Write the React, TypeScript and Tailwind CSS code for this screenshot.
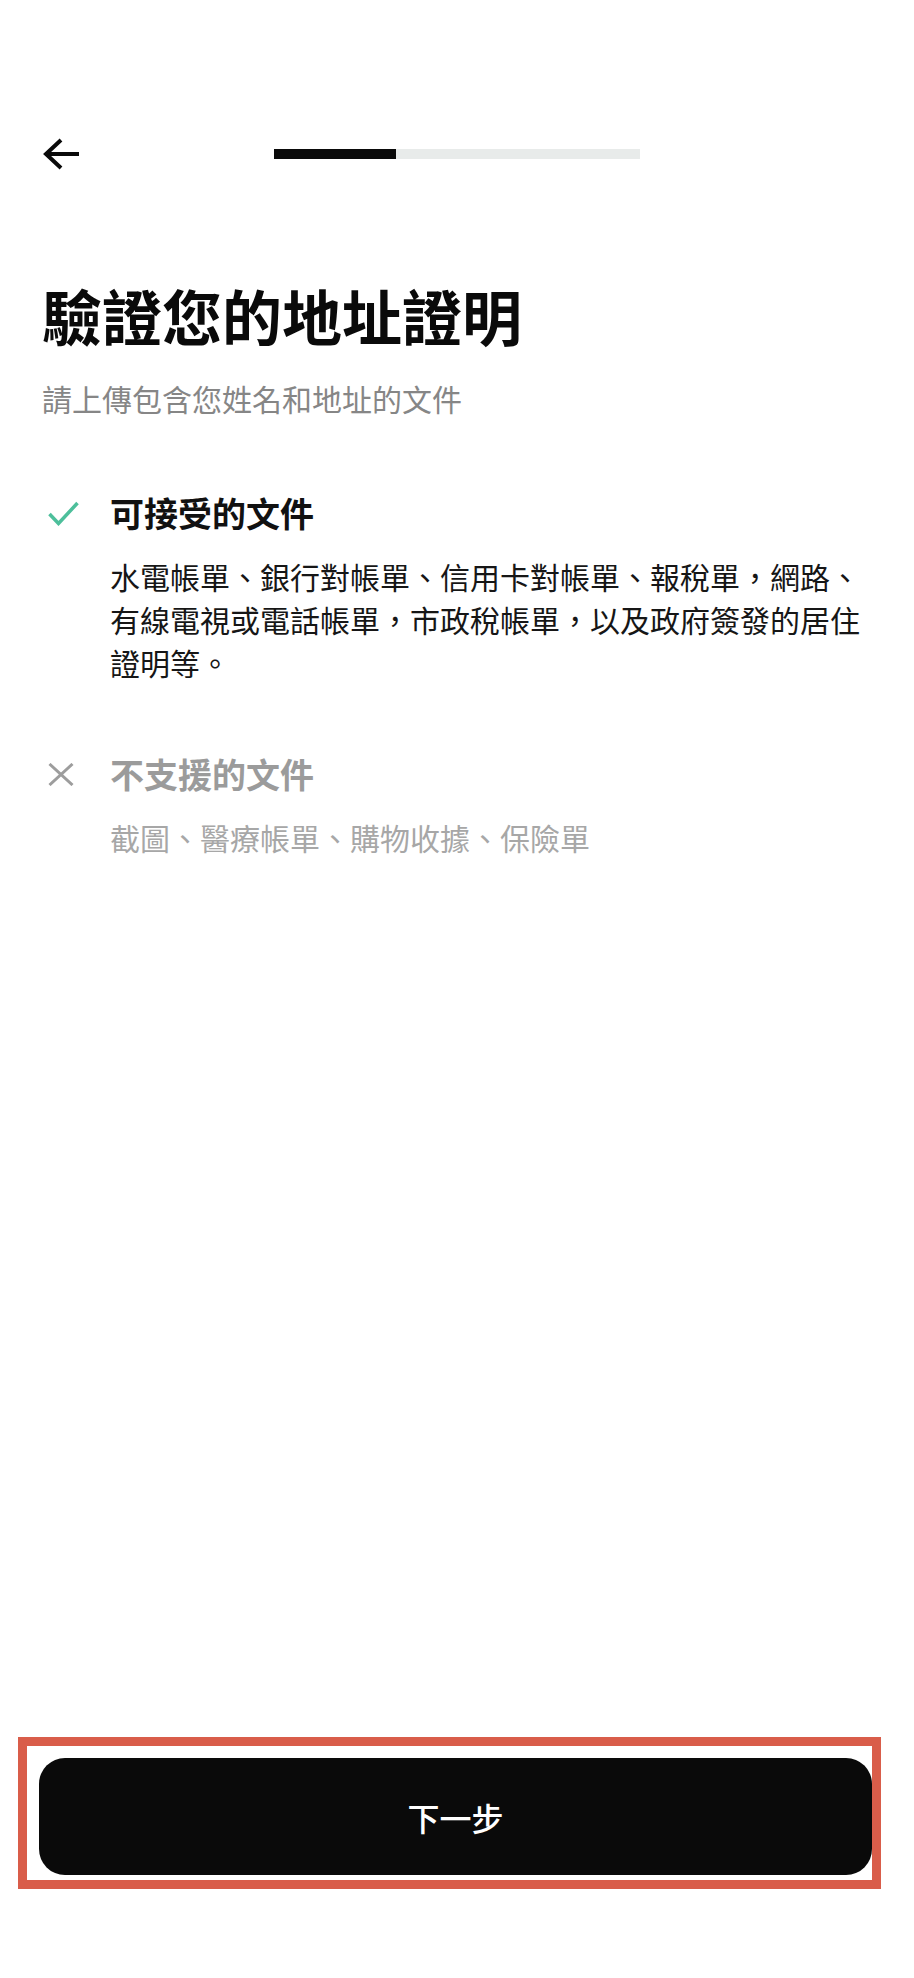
const FONT = '"Noto Sans CJK TC", "Noto Sans", sans-serif';

const BackArrow = () => (
  <svg width="36" height="32" viewBox="0 0 36 32" fill="none" stroke="#0a0a0a" strokeWidth="4">
    <path d="M2 16H36" />
    <path d="M18 2L3 16L18 30" />
  </svg>
);

const Check = () => (
  <svg width="31" height="25" viewBox="0 0 31 25" fill="none" stroke="#4dbf9b" strokeWidth="3.5">
    <path d="M1.5 13L10.5 22.5L29.5 2" />
  </svg>
);

const Cross = () => (
  <svg width="26" height="23" viewBox="0 0 26 23" fill="none" stroke="#9d9d9d" strokeWidth="3">
    <path d="M1.5 1L24.5 22M24.5 1L1.5 22" />
  </svg>
);

const Item = ({
  icon,
  title,
  body,
  muted,
}: {
  icon: React.ReactNode;
  title: string;
  body: string;
  muted?: boolean;
}) => (
  <div className="grid grid-cols-[68px_1fr]">
    <div className="flex h-[44px] items-center pl-[6px]">{icon}</div>
    <div>
      <h2
        className={`text-[34px] font-bold leading-[44px] ${muted ? 'text-[#9b9b9b]' : 'text-[#111111]'}`}
      >
        {title}
      </h2>
      <p
        className={`mt-[20px] text-[30px] leading-[43px] ${muted ? 'text-[#a7a7a7]' : 'text-[#161616]'}`}
      >
        {body}
      </p>
    </div>
  </div>
);

const App = () => {
  return (
    <div className="flex min-h-screen flex-col bg-white" style={{ fontFamily: FONT }}>
      <div className="px-[42px] pt-[138px]">
        {/* top bar */}
        <div className="grid h-[32px] grid-cols-[1fr_366px_1fr] items-center">
          <div className="pl-[1px]">
            <BackArrow />
          </div>
          <div className="flex h-[10px] bg-[#e8ebea]">
            <div className="w-[122px] bg-[#0a0a0a]" />
          </div>
          <div />
        </div>

        <h1 className="mt-[109px] text-[60px] font-bold leading-[72px] text-[#0a0a0a]">
          驗證您的地址證明
        </h1>
        <p className="mt-[27px] text-[30px] leading-[40px] text-[#868686]">
          請上傳包含您姓名和地址的文件
        </p>

        <div className="mt-[73px] flex flex-col gap-[68px]">
          <Item
            icon={<Check />}
            title="可接受的文件"
            body="水電帳單、銀行對帳單、信用卡對帳單、報稅單，網路、有線電視或電話帳單，市政稅帳單，以及政府簽發的居住證明等。"
          />
          <Item icon={<Cross />} title="不支援的文件" body="截圖、醫療帳單、購物收據、保險單" muted />
        </div>
      </div>

      <div className="mt-auto pb-[89px] pl-[18px]">
        <div className="w-[863px] border-[9px] border-[#d95d4a] pb-[5px] pl-[12px] pt-[12px]">
          <button className="flex h-[117px] w-full items-center justify-center rounded-[26px] bg-[#0a0a0a] text-[32px] font-medium text-white">
            下一步
          </button>
        </div>
      </div>
    </div>
  );
};

export default App;
